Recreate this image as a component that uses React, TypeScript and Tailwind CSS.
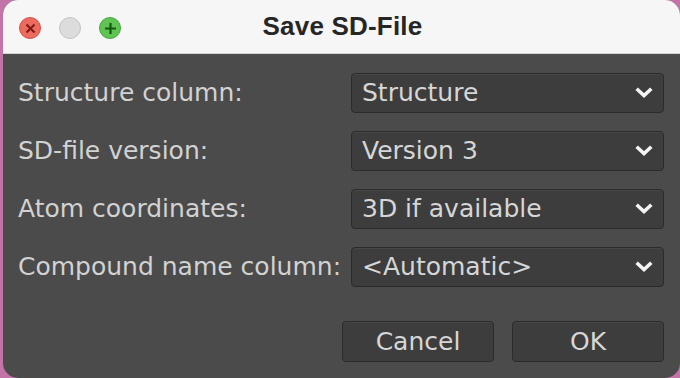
import React from "react";

const rows = [
  { label: "Structure column:", value: "Structure" },
  { label: "SD-file version:", value: "Version 3" },
  { label: "Atom coordinates:", value: "3D if available" },
  { label: "Compound name column:", value: "<Automatic>" },
];

function Chevron() {
  return (
    <svg width="20" height="12" viewBox="0 0 20 12" className="shrink-0">
      <path d="M4 3 L10 8.5 L16 3" fill="none" stroke="#f4f4f4" strokeWidth="3.6" strokeLinecap="square" />
    </svg>
  );
}

function Select({ value }: { value: string }) {
  return (
    <div className="flex h-[40px] w-[313px] items-center justify-between rounded-[4px] border border-[#2b2b2b] bg-[#3d3d3d] pl-[10px] pr-[9px] shadow-[inset_0_1px_0_#474747]">
      <span className="text-[#d6d6d6]">{value}</span>
      <Chevron />
    </div>
  );
}

function Button({ children }: { children: React.ReactNode }) {
  return (
    <button className="flex h-[41px] w-[152px] items-center justify-center rounded-[4px] border border-[#2b2b2b] bg-[#3d3d3d] text-[#d6d6d6] shadow-[inset_0_1px_0_#474747]">
      {children}
    </button>
  );
}

export default function App() {
  return (
    <div className="h-[378px] w-[680px] overflow-hidden bg-[#c274a8] pl-[3px]">
      <div className="flex h-[378px] flex-col overflow-hidden rounded-[15px] bg-[#4b4b4b]">
        <div className="relative flex h-[54px] shrink-0 items-center justify-center border-b border-[#d4d4d4] bg-[#f6f6f6] pb-[1px]">
          <div className="absolute left-[16px] top-[17px] flex gap-[18px]">
            <div className="flex h-[22px] w-[22px] items-center justify-center rounded-full border border-[#d0554a] bg-[#ec6a5e]">
              <svg width="11" height="11" viewBox="0 0 11 11">
                <path d="M1.5 1.5 L9.5 9.5 M9.5 1.5 L1.5 9.5" stroke="#7a1a12" strokeWidth="2" />
              </svg>
            </div>
            <div className="h-[22px] w-[22px] rounded-full border border-[#c4c4c4] bg-[#dcdcdc]" />
            <div className="flex h-[22px] w-[22px] items-center justify-center rounded-full border border-[#48a83d] bg-[#5fc453]">
              <svg width="13" height="13" viewBox="0 0 13 13">
                <path d="M6.5 1 V12 M1 6.5 H12" stroke="#135a0f" strokeWidth="2.2" />
              </svg>
            </div>
          </div>
          <span className="pl-[2px] font-['Liberation_Sans',sans-serif] text-[26px] font-bold tracking-[0.2px] text-[#262626]">Save SD-File</span>
        </div>
        <div className="flex flex-col pl-[15px] pr-[16px] pt-[19px] font-['DejaVu_Sans',sans-serif] text-[25px]">
          <div className="flex flex-col gap-[18px]">
            {rows.map((r) => (
              <div key={r.label} className="flex items-center justify-between">
                <span className="text-[#d2d2d2]">{r.label}</span>
                <Select value={r.value} />
              </div>
            ))}
          </div>
          <div className="mt-[34px] flex justify-end gap-[18px]">
            <Button>Cancel</Button>
            <Button>OK</Button>
          </div>
        </div>
      </div>
    </div>
  );
}
